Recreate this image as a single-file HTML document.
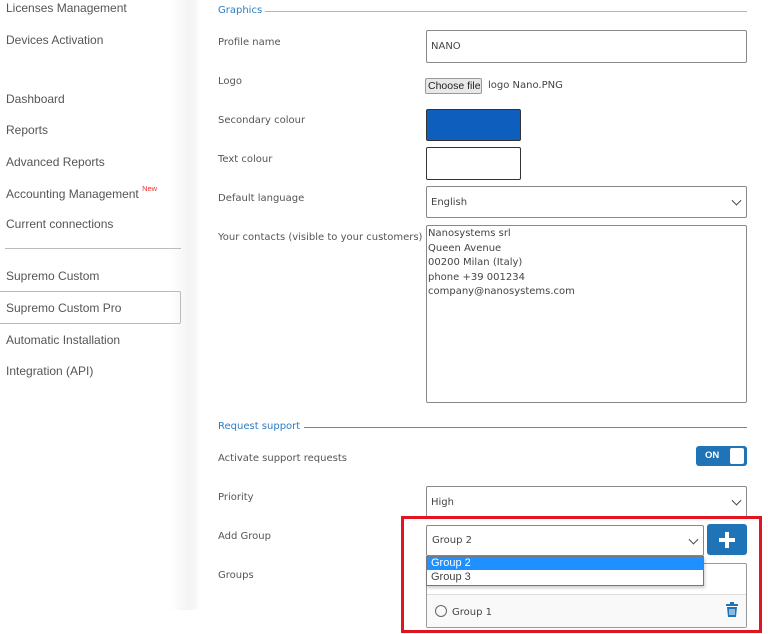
<!DOCTYPE html>
<html><head><meta charset="utf-8"><style>
*{box-sizing:border-box;margin:0;padding:0}
body{width:768px;height:634px;overflow:hidden;background:#fff;position:relative;font-family:"Liberation Sans","DejaVu Sans",sans-serif;color:#555}
.a{position:absolute;white-space:nowrap}
.s{font-size:12px;color:#555;left:6px}
.l{font-size:10px;left:218px;color:#555;font-family:"DejaVu Sans",sans-serif}
.box{position:absolute;border:1px solid #888;border-radius:2px;background:#fff}
.v{font-size:10px;color:#444;font-family:"DejaVu Sans",sans-serif}
.chev{position:absolute;right:6px;top:50%;width:7px;height:7px;border-right:1.6px solid #444;border-bottom:1.6px solid #444;transform:translateY(-70%) rotate(45deg)}
.mono{font-family:"DejaVu Sans",sans-serif;font-size:10px;color:#444;line-height:14.5px}
</style></head><body>
<div class="a" style="left:170px;top:0;width:28px;height:610px;background:linear-gradient(90deg,#fff 0%,#f3f3f3 70%,#fafafa 100%)"></div>
<div class="a s" style="top:1px">Licenses Management</div>
<div class="a s" style="top:33px">Devices Activation</div>
<div class="a s" style="top:92px">Dashboard</div>
<div class="a s" style="top:123px">Reports</div>
<div class="a s" style="top:155px">Advanced Reports</div>
<div class="a s" style="top:186px">Accounting Management <sup style="color:#e33;font-size:7.5px;position:relative;top:-2px">New</sup></div>
<div class="a s" style="top:217px">Current connections</div>
<div class="a" style="left:5px;top:248px;width:176px;height:1px;background:#bbb"></div>
<div class="a s" style="top:269px">Supremo Custom</div>
<div class="a" style="left:-2px;top:291px;width:183px;height:33px;border:1px solid #bbb;border-radius:2px"></div>
<div class="a s" style="top:301px">Supremo Custom Pro</div>
<div class="a s" style="top:333px">Automatic Installation</div>
<div class="a s" style="top:364px">Integration (API)</div>

<div class="a l" style="top:5px;color:#2c7cc4">Graphics</div>
<div class="a" style="left:265px;top:11px;width:482px;height:1px;background:#8fbde0"></div>
<div class="a l" style="top:37px">Profile name</div>
<div class="box" style="left:426px;top:30px;width:321px;height:33px"><span class="a v" style="left:4px;top:10px">NANO</span></div>
<div class="a l" style="top:76px">Logo</div>
<div class="a" style="left:425px;top:78px;width:57px;height:16px;background:#e8e8e8;border:1px solid #999;border-radius:2px;font-size:10.5px;color:#222;padding:1px 0 0 2px">Choose file</div>
<div class="a v" style="left:488px;top:80px">logo Nano.PNG</div>
<div class="a l" style="top:115px">Secondary colour</div>
<div class="a" style="left:426px;top:109px;width:95px;height:32px;background:#0e5fbd;border:1px solid #333;border-radius:2px"></div>
<div class="a l" style="top:154px">Text colour</div>
<div class="a" style="left:426px;top:147px;width:95px;height:33px;background:#fff;border:1px solid #333;border-radius:2px"></div>
<div class="a l" style="top:193px">Default language</div>
<div class="box" style="left:426px;top:186px;width:321px;height:32px"><span class="a v" style="left:4px;top:10px">English</span><div class="chev"></div></div>
<div class="a l" style="top:232px">Your contacts (visible to your customers)</div>
<div class="box" style="left:426px;top:225px;width:321px;height:178px;padding:1px 0 0 1px"><div class="mono">Nanosystems srl<br>Queen Avenue<br>00200 Milan (Italy)<br>phone +39 001234<br>company@nanosystems.com</div></div>

<div class="a l" style="top:421px;color:#2c7cc4">Request support</div>
<div class="a" style="left:304px;top:427px;width:443px;height:1px;background:#4a90cf"></div>
<div class="a l" style="top:453px">Activate support requests</div>
<div class="a" style="left:696px;top:446px;width:51px;height:20px;background:#1f73b7;border-radius:3px"><span class="a" style="left:9px;top:4px;color:#fff;font-size:9.5px;font-weight:bold">ON</span><div class="a" style="left:34px;top:2px;width:14px;height:16px;background:#fff;border-radius:2px"></div></div>
<div class="a l" style="top:492px">Priority</div>
<div class="box" style="left:426px;top:486px;width:321px;height:32px"><span class="a v" style="left:4px;top:10px">High</span><div class="chev"></div></div>
<div class="a l" style="top:531px">Add Group</div>
<div class="a l" style="top:570px">Groups</div>

<div class="a" style="left:401px;top:516px;width:361px;height:117px;border:3px solid #e2141f"></div>
<div class="box" style="left:426px;top:525px;width:278px;height:31px"><span class="a v" style="left:5px;top:9px">Group 2</span><div class="chev"></div></div>
<div class="a" style="left:707px;top:524px;width:40px;height:31px;background:#1f73b7;border-radius:3px"><div class="a" style="left:12px;top:14px;width:16px;height:4px;background:#fff"></div><div class="a" style="left:18px;top:8px;width:4px;height:16px;background:#fff"></div></div>
<div class="box" style="left:426px;top:563px;width:321px;height:65px;border-color:#999"><div class="a" style="left:0;top:30px;width:319px;height:1px;background:#ddd"></div><div class="a" style="left:0;top:31px;width:319px;height:32px;background:#f9f9f9"></div>
<div class="a" style="left:8px;top:41px;width:12px;height:12px;border:1px solid #666;border-radius:50%"></div><span class="a v" style="left:25px;top:43px">Group 1</span>
<svg class="a" style="left:298px;top:38px" width="14" height="16" viewBox="0 0 14 16"><rect x="1" y="2" width="12" height="2" fill="#1f73b7"/><rect x="5" y="0" width="4" height="2" fill="#1f73b7"/><path d="M2 5h10l-1 10H3z" fill="#1f73b7"/><path d="M5 7v6M7 7v6M9 7v6" stroke="#fff" stroke-width="1"/></svg></div>
<div class="a" style="left:426px;top:556px;width:278px;height:30px;background:#fff;border:1px solid #777;box-shadow:1px 2px 3px rgba(0,0,0,.2)"><div class="a" style="left:0;top:0;width:276px;height:13px;background:#1e90ff"></div><span class="a" style="left:4px;top:0;font-size:11px;color:#fff">Group 2</span><span class="a" style="left:4px;top:14px;font-size:11px;color:#444">Group 3</span></div>
</body></html>
